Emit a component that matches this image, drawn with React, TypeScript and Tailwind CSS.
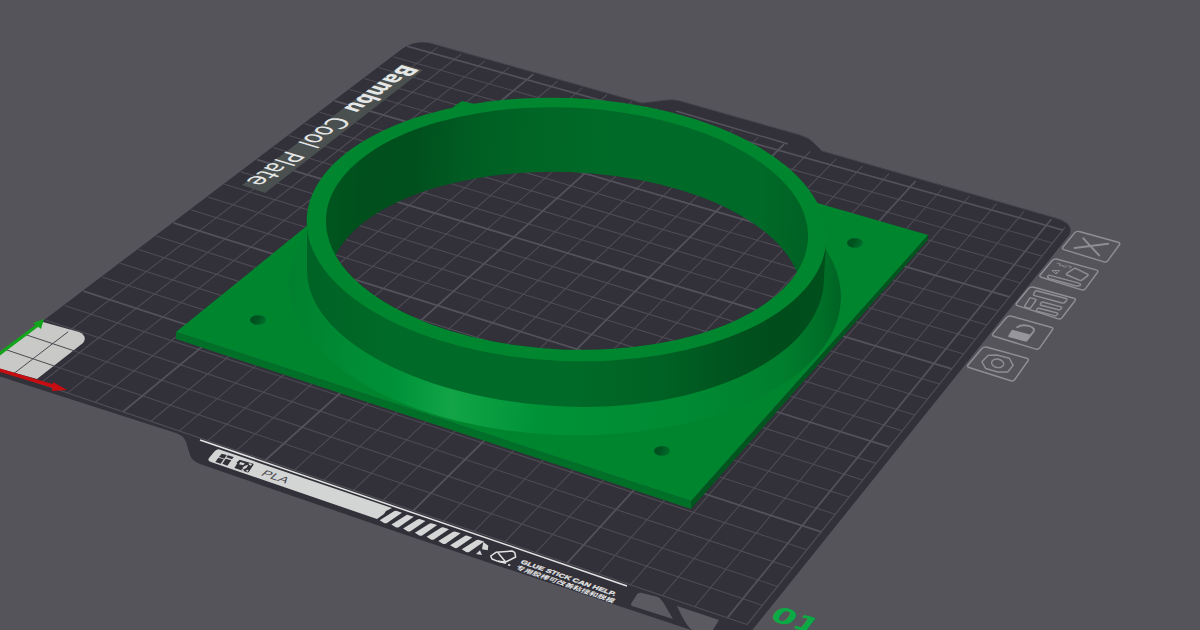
import React from "react";

type Point = [number, number];

const PLATE_MM = 256;

/* Projects a plate coordinate in millimetres onto the viewport. */
function project(x: number, y: number): Point {
  const u = x / PLATE_MM;
  const v = y / 250;
  const w = 1 - 0.0953 * u + 0.206 * v;
  return [(689.8 * u + 504.8 * v - 14) / w, (200 * u - 309.5 * v + 365) / w];
}

function line(a: Point, b: Point): string {
  const [x1, y1] = project(a[0], a[1]);
  const [x2, y2] = project(b[0], b[1]);
  return `M${x1.toFixed(2)} ${y1.toFixed(2)}L${x2.toFixed(2)} ${y2.toFixed(2)}`;
}

const steps = Array.from({ length: 26 }, (_, i) => i * 10);
const columns = (bold: boolean) =>
  steps.filter((s) => (s % 50 === 0) === bold && s > 0).map((s) => line([s, 0], [s, 255])).join("");
const rows = (bold: boolean) =>
  steps.filter((s) => (s % 50 === 0) === bold && s > 0).map((s) => line([0, s], [256, s])).join("");
const borderPath = line([0, 0], [256, 0]) + line([256, 0], [256, 252]);

function Grid() {
  return (
    <g fill="none">
      <path d={columns(false) + rows(false)} stroke="#4d4b53" strokeWidth="1.1" />
      <path d={columns(true) + rows(true)} stroke="#53515b" strokeWidth="1.8" />
      <path d={borderPath} stroke="#4f4d55" strokeWidth="1.2" />
    </g>
  );
}

function OriginCorner() {
  return (
    <g>
      <path d="M-14 365L43 322L79 332Q88 336 83 343L37 379Z" fill="#c9c9c8" />
      <path
        d={line([10, 0], [10, 28]) + line([0, 10], [18, 10]) + line([0, 20], [18, 20])}
        stroke="#4a4950"
        strokeWidth="1"
      />
      <path d="M-14 364L38 325" stroke="#12a51b" strokeWidth="3" />
      <path d="M33 323L44 319L41 329Z" fill="#12a51b" />
      <path d="M-14 366L56 387" stroke="#c70d10" strokeWidth="3.4" />
      <path d="M53 382L67 390L52 391Z" fill="#c70d10" />
    </g>
  );
}

function TitleLabel() {
  return (
    <g>
      <path d="M402 64L423 70L265 193L242 185Z" fill="#4a504f" />
      <g
        transform="matrix(-1.54 1.15 -2.38 -0.72 403 64)"
        fill="#e4e7e6"
        fontFamily="'DejaVu Sans', sans-serif"
        fontSize="11"
      >
        <text x="0" y="0" fontWeight="700" fontSize="10">Bambu</text>
        <text x="45" y="0">Cool</text>
        <text x="75" y="0">Plate</text>
      </g>
    </g>
  );
}

const stripes = Array.from({ length: 8 }, (_, i) => i);

function FrontBand() {
  return (
    <g>
      <path d="M200 440L627 586" stroke="#e2e4e4" strokeWidth="1.5" />
      <path d="M221 450L392 508L386 511L384 514L377 519L211 462Q207 461 209 458L214 452Q217 448 221 450Z" fill="#d3d5d5" />
      <g transform="translate(180 420) scale(.33333)">
        <g fill="#323138">
          <path d="M125 101L140 105L133 116L117 111Z" />
          <path d="M143 106L161 111L156 118L139 112Z" />
          <path d="M137 116L154 121L142 137L127 131Z" />
          <path d="M115 113L131 118L122 131L106 126Z" />
          <path d="M179 119L220 131Q222 132 220 135L207 155Q205 158 201 157L163 144L172 130L169 128Z" />
        </g>
        <g fill="#d3d5d5">
          <path d="M181 126L194 130L190 136L177 133Z" />
          <path d="M195 137L205 134L200 143L191 148L187 144Z" />
          <path d="M206 129L216 132L213 137L207 134ZM201 149L206 151L203 155L198 153ZM186 147L193 150L190 153L184 151Z" />
        </g>
      </g>
      <text
        transform="matrix(2.93 1 -1.75 1.62 260 475)"
        fill="#4a494f"
        fontFamily="'Liberation Sans', sans-serif"
        fontSize="4.6"
      >
        PLA
      </text>
      <g transform="translate(370 500) scale(.33333)" fill="#d5d7d7">
        {stripes.map((i) => (
          <path
            key={i}
            d="M29 61L72 34Q76 31 81 33L96 38L51 69Q47 71 42 69Z"
            transform={`translate(${i * 35.2} ${i * 12.4})`}
          />
        ))}
        <path d="M318 162L330 151L336 165Z" />
        <path d="M340 126L355 137L353 151L336 148Z" />
      </g>
      <g transform="translate(370 500) scale(.33333)" fill="none" stroke="#e2e4e4" strokeWidth="4.5" strokeLinejoin="round">
        <path d="M362 168L378 157L426 153L434 157L437 171L407 186L384 184L366 177Z" />
        <path d="M384 158L407 186" />
        <path d="M384 184L408 190M414 194L421 196" />
      </g>
      <g fill="#e2e4e4" transform="matrix(3.14 1.1 -1.55 1.82 520 563)">
        <text
          x="0"
          y="0"
          fontFamily="'Liberation Sans', sans-serif"
          fontWeight="700"
          fontSize="2.6"
          stroke="#e2e4e4"
          strokeWidth=".12"
        >
          GLUE STICK CAN HELP.
        </text>
        <text x="0" y="3.2" fontFamily="'Noto Sans CJK SC', sans-serif" fontWeight="700" fontSize="2.6">
          专用胶棒可改善粘接和脱模
        </text>
      </g>
      <path d="M642 593L658 597Q661 599 663 602L673 619L632 606Q630 605 632 602L636 596Q638 592 642 593Z" fill="#5b5a60" />
      <path d="M677 606L719 620L713 630H692Q686 626 677 606Z" fill="#5b5a60" />
    </g>
  );
}

function Plate() {
  return (
    <g>
      <path
        d="M-14 364L402 49Q414 40 430 43L642 103L667 100Q674 99 680 101L800 135Q810 138 814 143L822 151L1052 217Q1074 222 1070 234L750 633L700 633L400 533L200 464Q192 461 190 455L186 442Q184 436 176 433L-20 370Z"
        fill="#323038"
      />
      <path
        d="M430 43L642 103L667 100Q674 99 680 101L800 135Q810 138 814 143L822 151L1052 217Q1074 222 1070 234"
        fill="none"
        stroke="#45434b"
        strokeWidth="1"
      />
      <path d="M676 111L788 144" stroke="#55535c" strokeWidth="1.5" />
      <Grid />
      <OriginCorner />
      <TitleLabel />
      <FrontBand />
    </g>
  );
}

function Hole({ x, y }: { x: number; y: number }) {
  return <ellipse cx={x} cy={y} rx="8" ry="4.8" fill="url(#holeWall)" />;
}

function Model() {
  return (
    <g>
      <defs>
        <linearGradient id="holeWall" x1="0" y1="0" x2="1" y2="0.3">
          <stop offset="0" stopColor="#004f1d" />
          <stop offset=".5" stopColor="#005320" />
          <stop offset="1" stopColor="#006c29" />
        </linearGradient>
        <linearGradient id="innerWall" gradientUnits="userSpaceOnUse" x1="326" y1="0" x2="808" y2="0">
          <stop offset="0" stopColor="#00551e" />
          <stop offset=".08" stopColor="#004f1c" />
          <stop offset=".18" stopColor="#00501d" />
          <stop offset=".28" stopColor="#005c22" />
          <stop offset=".42" stopColor="#006626" />
          <stop offset=".6" stopColor="#006b28" />
          <stop offset=".9" stopColor="#006a28" />
          <stop offset="1" stopColor="#006124" />
        </linearGradient>
        <linearGradient id="outerWall" gradientUnits="userSpaceOnUse" x1="306" y1="0" x2="827" y2="0">
          <stop offset="0" stopColor="#006225" />
          <stop offset=".15" stopColor="#006a28" />
          <stop offset=".5" stopColor="#006b28" />
          <stop offset=".68" stopColor="#006224" />
          <stop offset=".82" stopColor="#00521e" />
          <stop offset=".92" stopColor="#004c1a" />
          <stop offset="1" stopColor="#00501c" />
        </linearGradient>
        <linearGradient id="flare" gradientUnits="userSpaceOnUse" x1="289" y1="0" x2="842" y2="0">
          <stop offset="0" stopColor="#00802e" />
          <stop offset=".1" stopColor="#008a33" />
          <stop offset=".2" stopColor="#009238" />
          <stop offset=".3" stopColor="#12a447" />
          <stop offset=".36" stopColor="#0b9e41" />
          <stop offset=".46" stopColor="#009237" />
          <stop offset=".75" stopColor="#008932" />
          <stop offset=".9" stopColor="#007e2d" />
          <stop offset=".97" stopColor="#006d27" />
          <stop offset="1" stopColor="#006224" />
        </linearGradient>
        <clipPath id="innerRim">
          <ellipse cx="567" cy="228.5" rx="241.3" ry="121" transform="rotate(2.4 567 228.5)" />
        </clipPath>
        <clipPath id="baseTop">
          <path d="M176 332L462 101L928 235L691 501Z" />
        </clipPath>
        <mask id="opening" maskUnits="userSpaceOnUse" x="0" y="0" width="1200" height="630">
          <rect width="1200" height="630" fill="#fff" />
          <g clipPath="url(#innerRim)">
            <ellipse cx="565" cy="290" rx="237" ry="118" transform="rotate(2 565 290)" fill="#000" />
          </g>
        </mask>
      </defs>
      <g mask="url(#opening)">
        <path d="M176 332L691 501V509L176 339Z" fill="#007029" />
        <path d="M691 501L928 235V240L691 509Z" fill="#00561e" />
        <path d="M176 332L456 105L462 101L475 104L928 235L691 501Z" fill="#00852f" />
        <g clipPath="url(#baseTop)">
          <ellipse cx="565" cy="290" rx="276" ry="145" transform="rotate(2 565 290)" fill="url(#flare)" />
        </g>
        <path d="M307 217V272C309 346 440 406 583 407C720 407 824 350 824 278L826 245Z" fill="url(#outerWall)" />
        <ellipse cx="566.5" cy="229.5" rx="260" ry="131.5" transform="rotate(2.4 566.5 229.5)" fill="#00862f" />
        <ellipse cx="567" cy="228.5" rx="241.3" ry="121" transform="rotate(2.4 567 228.5)" fill="url(#innerWall)" />
        <Hole x={258} y={320} />
        <Hole x={855} y={243} />
        <Hole x={662} y={451} />
      </g>
    </g>
  );
}

interface Action {
  label: string;
  x: number;
  y: number;
  frame: string;
  art: React.ReactNode;
}

const actions: Action[] = [
  {
    label: "Remove plate",
    x: 330,
    y: 24,
    frame: "M388 33L509 66Q516 68 513 74L477 123Q473 129 465 127L341 89Q334 87 338 81L374 37Q380 31 388 33Z",
    art: <path d="M401 54L450 107M374 84L478 71" strokeWidth="6" />,
  },
  {
    label: "Auto orient",
    x: 262,
    y: 108,
    frame: "M324 116L444 149Q452 151 448 157L411 207Q407 213 399 211L274 172Q267 170 271 164L308 120Q314 114 324 116Z",
    art: (
      <>
        <path d="M382 145L417 162Q421 164 418 167L401 180Q397 183 392 181L354 165Q350 163 353 160L374 146Q378 143 382 145Z" />
        <path d="M300 166L390 190Q399 193 394 197Q390 200 380 198L300 176Q292 173 294 169Q296 165 300 166Z" />
        <path d="M308 151L331 151L321 161ZM316 150L322 158" strokeWidth="3" />
        <path d="M323 128L334 131L329 135L340 135M345 134L341 139L350 141L352 136M357 137L368 140L362 144" strokeWidth="2.5" />
      </>
    ),
  },
  {
    label: "Arrange objects",
    x: 190,
    y: 192,
    frame: "M253 200L377 234Q385 236 381 242L341 294Q337 300 329 298L203 257Q196 255 200 249L237 204Q243 198 253 200Z",
    art: (
      <>
        <path d="M262 211L353 235Q358 237 355 241L349 247Q346 250 341 249L256 226Q250 224 253 220L257 213Q259 210 262 211Z" />
        <path d="M244 233L258 237Q261 238 259 242L244 263Q242 266 238 265L228 262Q223 260 226 256L239 236Q241 232 244 233Z" />
        <path d="M281 246L338 261Q341 263 339 265L335 269Q333 271 330 270L275 256Q272 254 274 252L277 247Q279 245 281 246ZM269 265L326 280Q329 282 327 284L323 287Q320 289 317 288L263 274Q260 272 262 270L265 266Q267 264 269 265Z" />
      </>
    ),
  },
  {
    label: "Lock plate",
    x: 120,
    y: 280,
    frame: "M186 288L308 322Q316 324 312 330L273 386Q269 392 261 390L131 350Q124 348 128 342L170 292Q176 286 186 288Z",
    art: (
      <>
        <path d="M187 330L249 346L235 364Q232 368 227 366L178 353Q173 351 176 347Z" fill="#97969b" stroke="none" />
        <path d="M203 322Q217 312 239 318Q262 325 252 338L241 350" strokeWidth="6" />
      </>
    ),
  },
  {
    label: "Plate settings",
    x: 46,
    y: 372,
    frame: "M113 380L236 414Q244 416 240 422L199 480Q195 486 187 484L57 443Q50 441 54 435L97 384Q103 378 113 380Z",
    art: (
      <>
        <path d="M117 405L144 404L182 414L194 436L177 457L146 457L109 446L97 425Z" />
        <ellipse cx="146" cy="430" rx="19" ry="13" transform="rotate(10 146 430)" />
      </>
    ),
  },
];

function PlateAction({ action }: { action: Action }) {
  return (
    <foreignObject x={950 + action.x / 3} y={220 + action.y / 3} width="66" height="40">
      <button type="button" aria-label={action.label} className="block h-full w-full cursor-pointer">
        <svg viewBox={`${action.x - 1} ${action.y - 2} 204 124`} className="block h-full w-full" aria-hidden="true">
          <g fill="none" stroke="#8f8e94" strokeWidth="4.5" strokeLinejoin="round" strokeLinecap="round">
            <path d={action.frame} />
            {action.art}
          </g>
        </svg>
      </button>
    </foreignObject>
  );
}

export default function App() {
  return (
    <main className="flex min-h-screen w-full items-start overflow-hidden bg-[#55545a]">
      <svg viewBox="0 0 1200 630" className="block h-auto w-full" role="group" aria-label="Build plate view">
        <Plate />
        <Model />
        <text
          transform="matrix(3.2 1.13 -1.46 1.87 768 619)"
          fill="#0caa45"
          fontFamily="'DejaVu Sans', sans-serif"
          fontWeight="700"
          fontSize="10"
        >
          01
        </text>
        {actions.map((action) => (
          <PlateAction key={action.label} action={action} />
        ))}
      </svg>
    </main>
  );
}
